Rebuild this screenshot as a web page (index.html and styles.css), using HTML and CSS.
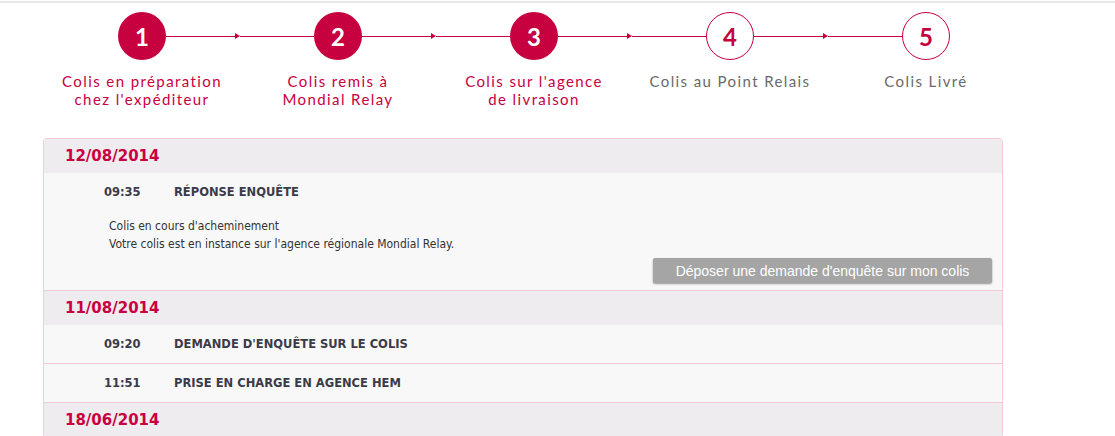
FILE: index.html
```html
<!DOCTYPE html>
<html lang="fr">
<head>
<meta charset="utf-8">
<title>Suivi de colis</title>
<link rel="stylesheet" href="styles.css">
</head>
<body>
<div class="topline"></div>
<div class="steps">
  <div class="step done first">
    <div class="track"><div class="seg"></div><div class="circle">1</div><div class="seg"><div class="line"></div><div class="arrow"></div></div></div>
    <div class="label">Colis en préparation<br>chez l'expéditeur</div>
  </div>
  <div class="step done">
    <div class="track"><div class="seg"><div class="line"></div></div><div class="circle">2</div><div class="seg"><div class="line"></div><div class="arrow"></div></div></div>
    <div class="label">Colis remis à<br>Mondial Relay</div>
  </div>
  <div class="step done">
    <div class="track"><div class="seg"><div class="line"></div></div><div class="circle">3</div><div class="seg"><div class="line"></div><div class="arrow"></div></div></div>
    <div class="label">Colis sur l'agence<br>de livraison</div>
  </div>
  <div class="step todo">
    <div class="track"><div class="seg"><div class="line"></div></div><div class="circle">4</div><div class="seg"><div class="line"></div><div class="arrow"></div></div></div>
    <div class="label">Colis au Point Relais</div>
  </div>
  <div class="step todo last">
    <div class="track"><div class="seg"><div class="line"></div></div><div class="circle">5</div><div class="seg"></div></div>
    <div class="label">Colis Livré</div>
  </div>
</div>

<div class="card">
  <div class="day">
    <div class="day-header">12/08/2014</div>
    <div class="event">
      <div class="event-row"><span class="time">09:35</span><span class="title">RÉPONSE ENQUÊTE</span></div>
      <div class="desc">Colis en cours d'acheminement<br>Votre colis est en instance sur l'agence régionale Mondial Relay.</div>
      <div class="actions"><button class="btn">Déposer une demande d'enquête sur mon colis</button></div>
    </div>
  </div>
  <div class="day">
    <div class="day-header">11/08/2014</div>
    <div class="event">
      <div class="event-row"><span class="time">09:20</span><span class="title">DEMANDE D'ENQUÊTE SUR LE COLIS</span></div>
    </div>
    <div class="event">
      <div class="event-row"><span class="time">11:51</span><span class="title">PRISE EN CHARGE EN AGENCE HEM</span></div>
    </div>
  </div>
  <div class="day">
    <div class="day-header">18/06/2014</div>
  </div>
</div>
</body>
</html>
```

FILE: styles.css
```css
html { overflow: hidden; }
body {
  margin: 0;
  background: #fff;
  font-family: "DejaVu Sans", Verdana, sans-serif;
}
.topline {
  height: 2px;
  margin-top: 1px;
  background: #e8e8e8;
}
.steps {
  display: flex;
  margin-left: 44px;
  padding-top: 9px;
}
.step {
  width: 196px;
  display: flex;
  flex-direction: column;
  align-items: center;
}
.track {
  width: 100%;
  height: 48px;
  display: flex;
  align-items: center;
}
.seg {
  flex: 1;
  display: flex;
  align-items: center;
  height: 7px;
}
.line {
  flex: 1;
  height: 1px;
  background: #c7003f;
}
.arrow {
  width: 0;
  height: 0;
  border-left: 5px solid #c7003f;
  border-top: 3px solid transparent;
  border-bottom: 3px solid transparent;
}
.circle {
  width: 48px;
  height: 48px;
  box-sizing: border-box;
  border-radius: 50%;
  display: flex;
  align-items: center;
  justify-content: center;
  font-family: "Lato", sans-serif;
  font-weight: 700;
  font-size: 24px;
}
.done .circle { background: #c7003f; color: #fff; }
.todo .circle { border: 1px solid #c7003f; color: #c7003f; background: #fff; }
.label {
  margin-top: 12px;
  font-family: "Lato", sans-serif;
  font-size: 15px;
  letter-spacing: 1.4px;
  line-height: 18px;
  text-align: center;
  white-space: nowrap;
}
.done .label { color: #c7003f; }
.todo .label { color: #6a6a6a; }

.card {
  margin: 30px 0 0 43px;
  width: 958px;
  border: 1px solid #f5c8d8;
  border-radius: 4px;
  overflow: hidden;
  background: #f8f8f8;
}
.day + .day { border-top: 1px solid #f5c8d8; }
.day-header {
  height: 34px;
  line-height: 34px;
  padding-left: 21px;
  background: #efecef;
  color: #c7003f;
  font-weight: 700;
  font-size: 15px;
}
.event + .event { border-top: 1px solid #f5c8d8; }
.event-row {
  height: 38px;
  display: flex;
  align-items: center;
  padding-left: 60px;
  font-size: 11.5px;
  font-weight: 700;
  color: #3b3b48;
}
.time { width: 70px; }
.desc {
  padding: 6px 0 0 65px;
  font-family: "DejaVu Sans Condensed", "DejaVu Sans", sans-serif;
  font-size: 12px;
  line-height: 18px;
  color: #333;
}
.actions {
  display: flex;
  justify-content: flex-end;
  padding: 5px 10px 7px 0;
}
.btn {
  height: 25px;
  width: 339px;
  border: 0;
  border-radius: 2px;
  background: #a5a5a5;
  color: #fff;
  font-family: "Liberation Sans", Arial, sans-serif;
  font-size: 14px;
  padding: 0;
  box-shadow: 0 1px 2px rgba(0,0,0,0.4);
}
```
